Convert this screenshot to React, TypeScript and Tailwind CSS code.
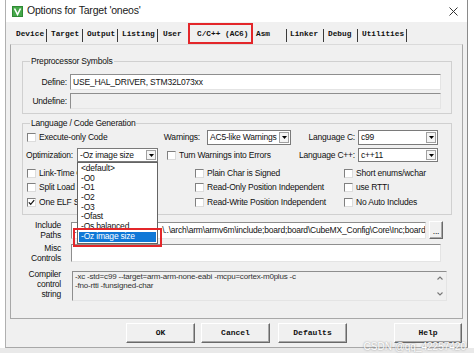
import React from "react";

const sans = "font-['Liberation_Sans',Arial,sans-serif]";
const mono = "font-['Liberation_Mono','Courier_New',monospace]";
const sunken =
  "border border-t-[#8e8e8e] border-l-[#8e8e8e] border-b-[#e4e4e4] border-r-[#e4e4e4]";
const raised =
  "border border-t-white border-l-white border-b-[#696969] border-r-[#696969] shadow-[inset_-1px_-1px_0_#a8a8a8] bg-[#f0f0f0]";

type StripItem = { t?: string; a?: string; s?: boolean; c: string };

const strip: StripItem[] = [
  { t: "Device", c: "ml-[10px] w-[28px]" },
  { s: true, c: "ml-[2px]" },
  { t: "Target", c: "ml-[4px] w-[28px]" },
  { s: true, c: "ml-[3px]" },
  { t: "Output", c: "ml-[4px] w-[27px]" },
  { s: true, c: "ml-[3px]" },
  { t: "Listing", c: "ml-[4px] w-[33px]" },
  { s: true, c: "ml-[2px]" },
  { t: "User", c: "ml-[5px] w-[18px]" },
  { a: "C/C++ (AC6)", c: "ml-[7px] w-[65px]" },
  { t: "Asm", c: "ml-[3px] w-[16px]" },
  { s: true, c: "ml-[14px]" },
  { t: "Linker", c: "ml-[3px] w-[28px]" },
  { s: true, c: "ml-[5px]" },
  { t: "Debug", c: "ml-[4px] w-[25px]" },
  { s: true, c: "ml-[4px]" },
  { t: "Utilities", c: "ml-[4px] w-[43px]" },
  { s: true, c: "ml-[1px]" },
];

const optLevels = ["<default>", "-O0", "-O1", "-O2", "-O3", "-Ofast", "-Os balanced", "-Oz image size"];

function Check({ checked = false }: { checked?: boolean }) {
  return (
    <span className="flex h-[9px] w-[9px] shrink-0 items-center justify-center border border-t-[#808080] border-l-[#808080] border-b-[#dcdcdc] border-r-[#dcdcdc] bg-white">
      {checked && (
        <svg width="7" height="7" viewBox="0 0 7 7">
          <path d="M0.8 3.4 L2.7 5.3 L6.2 1.2" fill="none" stroke="#1a1a1a" strokeWidth="1.3" />
        </svg>
      )}
    </span>
  );
}

function Combo({ value }: { value: string }) {
  return (
    <div className="flex h-full w-full items-center border border-[#7a7a7a] bg-white">
      <span className="flex-1 overflow-hidden whitespace-nowrap pl-[2px]">{value}</span>
      <span className="mr-[1px] flex h-[calc(100%-2px)] w-[10px] items-center justify-center border border-[#a0a0a0] bg-[#f4f4f4]">
        <svg width="5" height="3" viewBox="0 0 5 3">
          <path d="M0 0 H5 L2.5 3 Z" fill="#000" />
        </svg>
      </span>
    </div>
  );
}

function Group({ title, className, children }: { title: string; className: string; children: React.ReactNode }) {
  return (
    <div className={`relative w-[430px] border border-[#d0d0d0] ${className}`}>
      <span className="absolute left-[7px] top-[-6px] bg-[#f0f0f0] px-[1px] leading-[11px]">{title}</span>
      {children}
    </div>
  );
}

function CheckRow({ left, mid, right, leftChecked = false, h }: { left: string; mid: string; right: string; leftChecked?: boolean; h: string }) {
  return (
    <div className={`flex items-center pl-[4px] ${h}`}>
      <Check checked={leftChecked} />
      <span className="ml-[3px] w-[156px] overflow-hidden whitespace-nowrap">{left}</span>
      <Check />
      <span className="ml-[3px] w-[137px] whitespace-nowrap">{mid}</span>
      <Check />
      <span className="ml-[3px] whitespace-nowrap">{right}</span>
    </div>
  );
}

export default function App() {
  return (
    <div className={`relative h-[353px] w-[474px] overflow-hidden bg-white text-[8.5px] tracking-[-0.2px] text-[#111] ${sans}`}>
      <div className="ml-[5px] w-[463px] border-b border-r border-l border-b-[#a8a8a8] border-r-[#8a8a8a] border-l-[#b0b0b0] bg-[#f0f0f0]">
        {/* title bar */}
        <div className="flex h-[22px] items-center bg-white pl-[6px]">
          <svg width="11" height="11" viewBox="0 0 11 11" className="shrink-0">
            <rect x="0" y="0" width="11" height="11" fill="#2f8a34" />
            <rect x="1" y="1" width="9" height="9" fill="#46a84a" />
            <path d="M2.5 2.5 L5.5 8.5 L8.5 2.5" fill="none" stroke="#fff" strokeWidth="1.6" />
          </svg>
          <span className="ml-[4px] text-[10.5px] tracking-[-0.2px] text-[#1a1a1a]">Options for Target 'oneos'</span>
          <svg width="9" height="9" viewBox="0 0 9 9" className="ml-auto mr-[9px]">
            <path d="M0.5 0.5 L8.5 8.5 M8.5 0.5 L0.5 8.5" stroke="#333" strokeWidth="1" />
          </svg>
        </div>

        {/* tab strip */}
        <div className={`flex h-[22px] items-center text-[7.8px] font-bold tracking-normal ${mono}`}>
          {strip.map((it, i) =>
            it.s ? (
              <span key={i} className={`mt-[4px] h-[13px] w-px bg-[#3a3a3a] ${it.c}`} />
            ) : it.a ? (
              <span key={i} className={`flex h-[21px] items-center border-2 border-[#e3262a] pl-[7px] pt-[4px] ${it.c}`}>
                {it.a}
              </span>
            ) : (
              <span key={i} className={`mt-[4px] whitespace-nowrap ${it.c}`}>
                {it.t}
              </span>
            )
          )}
        </div>

        {/* tab page */}
        <div className="ml-[4px] h-[275px] w-[453px] border border-[#a8a8a8] border-t-[#dadada] pl-[11px]">
          <Group title="Preprocessor Symbols" className="mt-[16px] h-[53px] pt-[12px]">
            <div className="flex h-[16px] items-center">
              <span className="w-[44px] text-right">Define:</span>
              <div className={`ml-[3px] flex h-full w-[371px] items-center bg-white pl-[2px] ${sunken}`}>
                USE_HAL_DRIVER, STM32L073xx
              </div>
            </div>
            <div className="mt-[3px] flex h-[16px] items-center">
              <span className="w-[44px] text-right">Undefine:</span>
              <div className={`ml-[3px] h-full w-[371px] bg-[#f0f0f0] ${sunken}`} />
            </div>
          </Group>

          <Group title="Language / Code Generation" className="mt-[9px] h-[92px] pt-[6px]">
            <div className="flex h-[15px] items-center pl-[4px]">
              <Check />
              <span className="ml-[3px] w-[120px]">Execute-only Code</span>
              <span className="w-[41px] text-right">Warnings:</span>
              <div className="ml-[7px] h-full w-[84px]">
                <Combo value="AC5-like Warnings" />
              </div>
              <span className="w-[64px] text-right">Language C:</span>
              <div className="ml-[3px] h-full w-[80px]">
                <Combo value="c99" />
              </div>
            </div>

            <div className="relative z-10 mt-[3px] flex h-[14px] items-center pl-[3px]">
              <span className="w-[51px]">Optimization:</span>
              <div className="relative h-full w-[81px]">
                <Combo value="-Oz image size" />
                <div className="absolute left-0 top-[14px] w-[81px] border border-[#646464] bg-white pb-[1px] pt-[1px]">
                  {optLevels.map((o, i) => (
                    <div
                      key={o}
                      className={`mx-[1px] h-[9.7px] whitespace-nowrap pl-[2px] leading-[9.7px] ${
                        i === optLevels.length - 1 ? "bg-[#0f78d7] text-white" : ""
                      }`}
                    >
                      {o}
                    </div>
                  ))}
                </div>
                <div className="absolute left-[-4px] top-[80px] h-[19px] w-[89px] border-2 border-[#e3262a]" />
              </div>
              <span className="ml-[9px]">
                <Check />
              </span>
              <span className="ml-[3px] w-[120px] whitespace-nowrap">Turn Warnings into Errors</span>
              <span className="w-[56px] text-right">Language C++:</span>
              <div className="ml-[3px] h-full w-[80px]">
                <Combo value="c++11" />
              </div>
            </div>

            <CheckRow h="mt-[4px] h-[14px]" left="Link-Time Optimization" mid="Plain Char is Signed" right="Short enums/wchar" />
            <CheckRow h="h-[15px]" left="Split Load and Store Multiple" mid="Read-Only Position Independent" right="use RTTI" />
            <CheckRow h="h-[14px]" leftChecked left="One ELF Section per Function" mid="Read-Write Position Independent" right="No Auto Includes" />
          </Group>

          <div className="mt-[5px] flex h-[20px] items-center">
            <div className="w-[39px] text-right leading-[10px]">
              Include
              <br />
              Paths
            </div>
            <div className={`ml-[10px] flex h-[17px] w-[355px] items-center overflow-hidden whitespace-nowrap bg-white pl-[2px] ${sunken}`}>
              <span className="w-[86px] shrink-0 overflow-hidden">..\..\..\kernel\include;..\..</span>
              <span>.\..\arch\arm\armv6m\include;board;board\CubeMX_Config\Core\Inc;board\ports</span>
            </div>
            <div className={`ml-[3px] flex h-[18px] w-[14px] items-end justify-center pb-[3px] leading-none ${raised}`}>...</div>
          </div>

          <div className="mt-[3px] flex h-[20px] items-center">
            <div className="w-[39px] text-right leading-[10px]">
              Misc
              <br />
              Controls
            </div>
            <div className={`ml-[10px] h-[18px] w-[370px] bg-white ${sunken}`} />
          </div>

          <div className="mt-[8px] flex h-[30px] items-start">
            <div className="mt-[-2px] w-[39px] text-right leading-[10px]">
              Compiler
              <br />
              control
              <br />
              string
            </div>
            <div className={`ml-[11px] flex h-[30px] w-[375px] bg-[#f0f0f0] ${sunken}`}>
              <div className="flex-1 pl-[2px] pt-[1px] text-[8px] leading-[8.5px] text-[#333]">
                <div className="whitespace-nowrap">-xc -std=c99 --target=arm-arm-none-eabi -mcpu=cortex-m0plus -c</div>
                <div className="whitespace-nowrap">-fno-rtti -funsigned-char</div>
              </div>
              <div className="flex w-[12px] flex-col items-center justify-between py-[4px]">
                <svg width="6" height="4" viewBox="0 0 6 4">
                  <path d="M0.5 3.5 L3 1 L5.5 3.5" fill="none" stroke="#777" strokeWidth="1.1" />
                </svg>
                <svg width="6" height="4" viewBox="0 0 6 4">
                  <path d="M0.5 0.5 L3 3 L5.5 0.5" fill="none" stroke="#777" strokeWidth="1.1" />
                </svg>
              </div>
            </div>
          </div>
        </div>

        {/* buttons */}
        <div className={`mt-[4px] flex h-[20px] text-[8px] font-bold tracking-normal ${mono}`}>
          <div className={`ml-[120px] flex w-[69px] items-center justify-center ${raised}`}>OK</div>
          <div className={`ml-[6px] flex w-[69px] items-center justify-center ${raised}`}>Cancel</div>
          <div className={`ml-[8px] flex w-[69px] items-center justify-center ${raised}`}>Defaults</div>
          <div className={`ml-[47px] flex w-[68px] items-center justify-center ${raised}`}>Help</div>
        </div>
        <div className="h-[4px]" />
      </div>
      <div className="h-[6px] bg-[#e9e9e9]" />

      <span className="absolute bottom-[-1px] right-[8px] text-[10px] tracking-normal text-white [text-shadow:0_0_2px_rgba(0,0,0,0.45)]">
        CSDN @qq_42257420
      </span>
    </div>
  );
}
